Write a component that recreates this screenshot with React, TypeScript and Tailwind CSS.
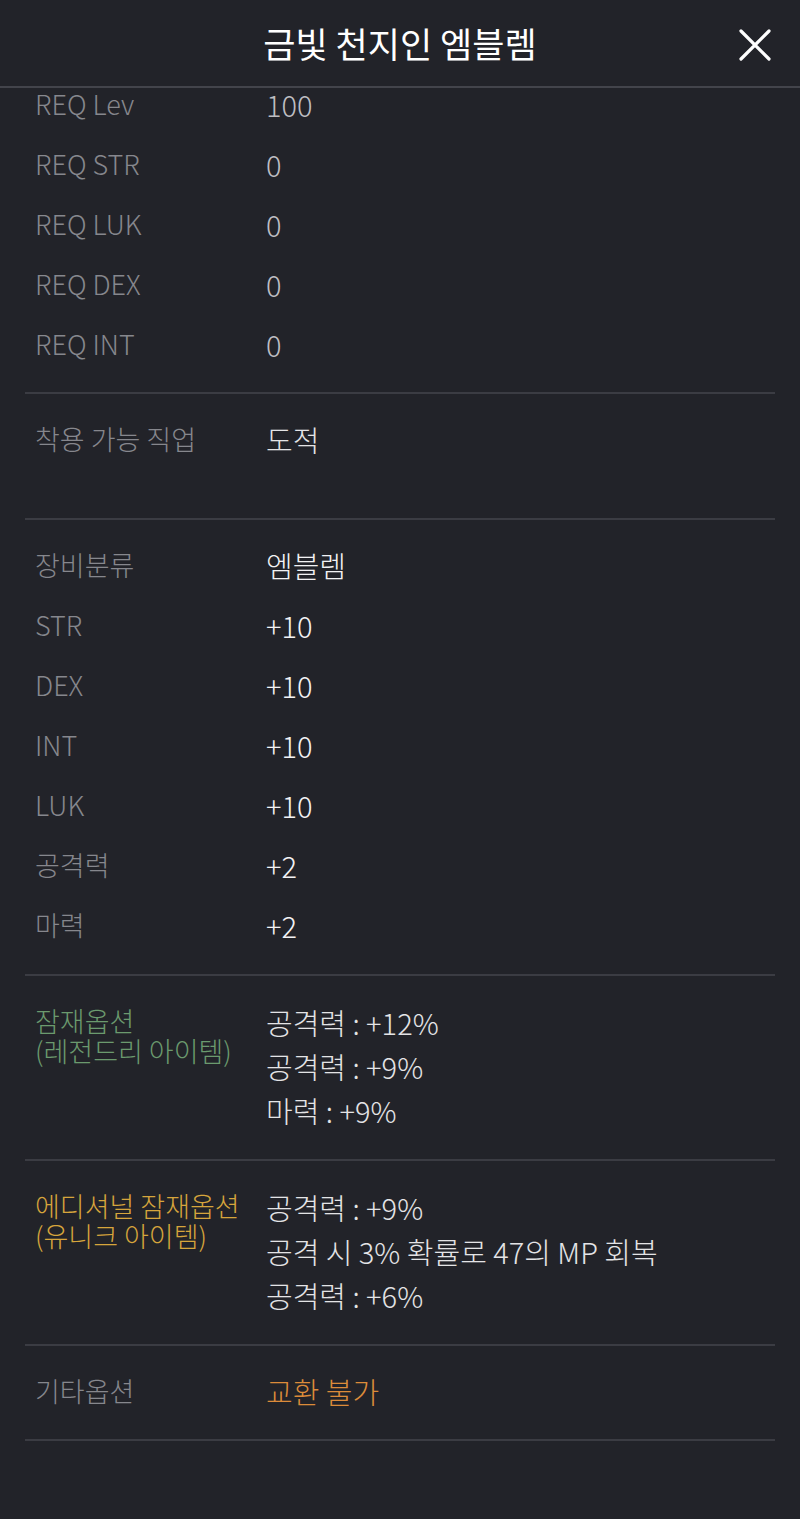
import React from "react";

type Row = { label: string; value: string };

const reqRows: Row[] = [
  { label: "REQ Lev", value: "100" },
  { label: "REQ STR", value: "0" },
  { label: "REQ LUK", value: "0" },
  { label: "REQ DEX", value: "0" },
  { label: "REQ INT", value: "0" },
];

const statRows: Row[] = [
  { label: "장비분류", value: "엠블렘" },
  { label: "STR", value: "+10" },
  { label: "DEX", value: "+10" },
  { label: "INT", value: "+10" },
  { label: "LUK", value: "+10" },
  { label: "공격력", value: "+2" },
  { label: "마력", value: "+2" },
];

const Divider = () => <div className="mx-[25px] h-[2px] bg-[#3b3c43]" />;

const SimpleRow = ({ row, valueClass }: { row: Row; valueClass: string }) => (
  <div className="flex h-[32px] items-center">
    <div className="w-[231px] text-[27px] leading-[32px] font-light text-[#86878d]">{row.label}</div>
    <div className={`text-[29px] leading-[32px] font-light ${valueClass}`}>{row.value}</div>
  </div>
);

const MultiRow = ({
  labels,
  labelClass,
  values,
}: {
  labels: string[];
  labelClass: string;
  values: string[];
}) => (
  <div className="flex items-start">
    <div className={`mt-[6px] w-[231px] text-[27px] leading-[30px] font-light ${labelClass}`}>
      {labels.map((l) => (
        <div key={l}>{l}</div>
      ))}
    </div>
    <div className="text-[29px] leading-[44px] font-light text-[#e4e4e6]">
      {values.map((v, i) => (
        <div key={i}>{v}</div>
      ))}
    </div>
  </div>
);

export default function App() {
  return (
    <div
      className="min-h-[1519px] w-[800px] bg-[#222329]"
      style={{ fontFamily: '"Noto Sans CJK KR", "Noto Sans", sans-serif' }}
    >
      <header className="relative flex h-[88px] items-center justify-center border-b-2 border-[#43444b]">
        <h1 className="text-[35px] font-normal text-white">금빛 천지인 엠블렘</h1>
        <button className="absolute right-[28px] top-[28px] text-white">
          <svg width="34" height="34" viewBox="0 0 34 34" fill="none">
            <path d="M3 3L31 31M31 3L3 31" stroke="currentColor" strokeWidth="3.2" strokeLinecap="round" />
          </svg>
        </button>
      </header>

      <section className="flex flex-col gap-[28px] pb-[32px] pl-[35px]">
        {reqRows.map((r) => (
          <SimpleRow key={r.label} row={r} valueClass="text-[#bebec2]" />
        ))}
      </section>
      <Divider />

      <section className="pb-[63px] pl-[35px] pt-[29px]">
        <SimpleRow row={{ label: "착용 가능 직업", value: "도적" }} valueClass="text-[#e4e4e6]" />
      </section>
      <Divider />

      <section className="flex flex-col gap-[28px] pb-[33px] pl-[35px] pt-[29px]">
        {statRows.map((r) => (
          <SimpleRow key={r.label} row={r} valueClass="text-[#f2f2f4]" />
        ))}
      </section>
      <Divider />

      <section className="pb-[27px] pl-[35px] pt-[24px]">
        <MultiRow
          labels={["잠재옵션", "(레전드리 아이템)"]}
          labelClass="text-[#6b9a6e]"
          values={["공격력 : +12%", "공격력 : +9%", "마력 : +9%"]}
        />
      </section>
      <Divider />

      <section className="pb-[27px] pl-[35px] pt-[24px]">
        <MultiRow
          labels={["에디셔널 잠재옵션", "(유니크 아이템)"]}
          labelClass="text-[#d6a53c]"
          values={["공격력 : +9%", "공격 시 3% 확률로 47의 MP 회복", "공격력 : +6%"]}
        />
      </section>
      <Divider />

      <section className="pb-[32px] pl-[35px] pt-[29px]">
        <SimpleRow row={{ label: "기타옵션", value: "교환 불가" }} valueClass="text-[#dc8b3a]" />
      </section>
      <Divider />
    </div>
  );
}
